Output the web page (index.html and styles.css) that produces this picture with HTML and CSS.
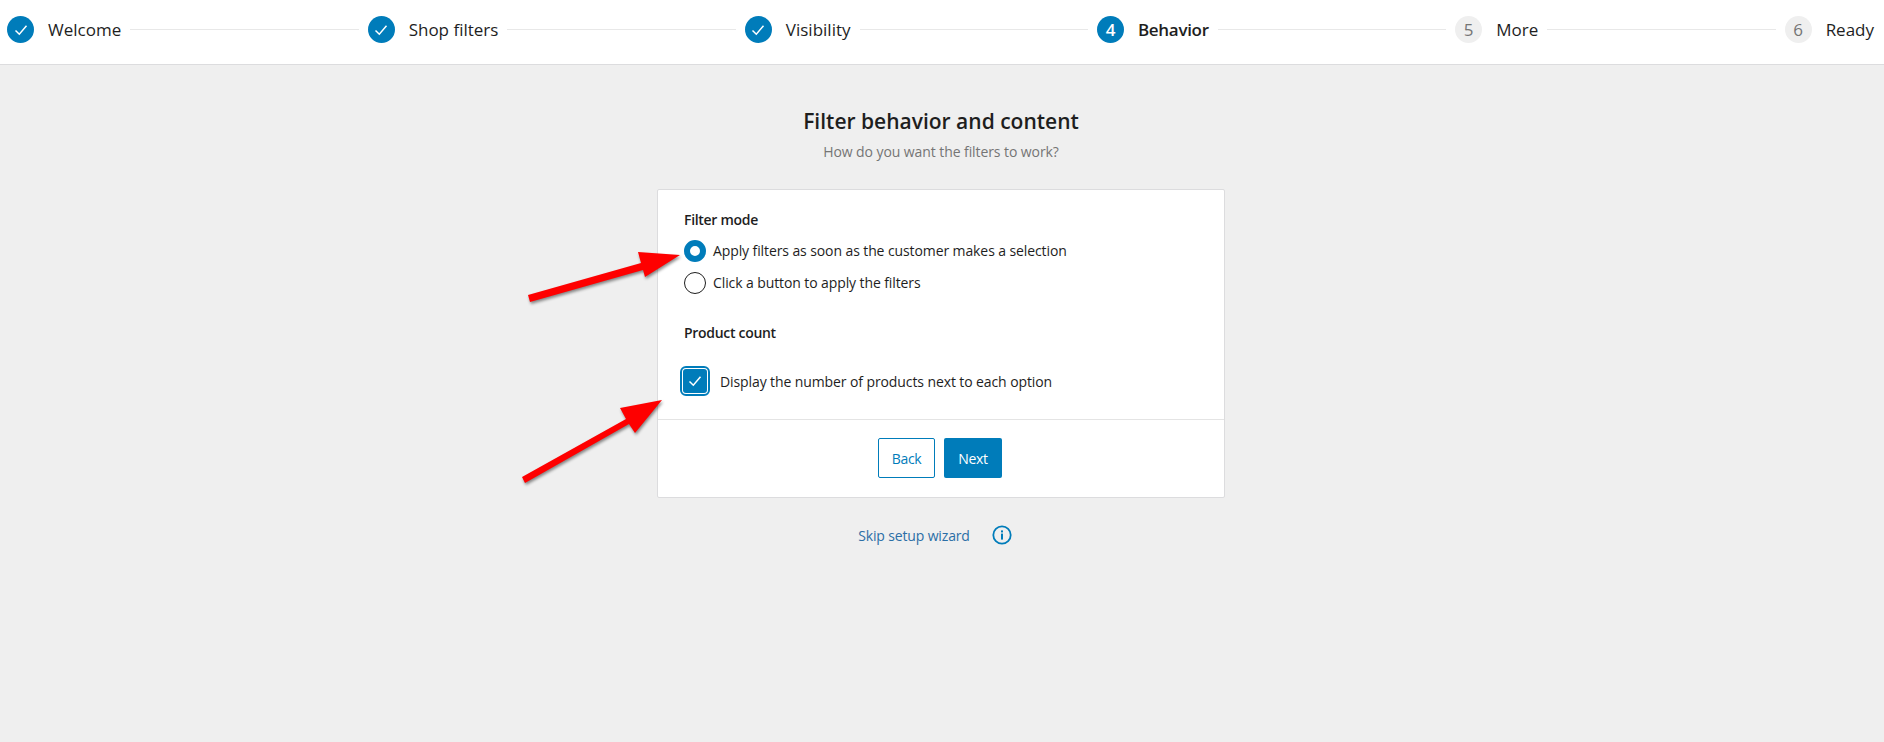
FILE: index.html
```html
<!DOCTYPE html>
<html lang="en">
<head>
    <meta charset="UTF-8">
    <title>Filter behavior and content</title>
    <link rel="stylesheet" href="styles.css">
</head>
<body>
    <header class="steps">
        <div class="step done">
            <span class="step-num"><svg width="16" height="16" viewBox="0 0 16 16"><path d="M2.5 8.5 L6.3 12.2 L13.5 3.8" fill="none" stroke="#fff" stroke-width="1.5"/></svg></span>
            <span class="step-label">Welcome</span>
        </div>
        <div class="step-line"></div>
        <div class="step done">
            <span class="step-num"><svg width="16" height="16" viewBox="0 0 16 16"><path d="M2.5 8.5 L6.3 12.2 L13.5 3.8" fill="none" stroke="#fff" stroke-width="1.5"/></svg></span>
            <span class="step-label">Shop filters</span>
        </div>
        <div class="step-line"></div>
        <div class="step done">
            <span class="step-num"><svg width="16" height="16" viewBox="0 0 16 16"><path d="M2.5 8.5 L6.3 12.2 L13.5 3.8" fill="none" stroke="#fff" stroke-width="1.5"/></svg></span>
            <span class="step-label">Visibility</span>
        </div>
        <div class="step-line"></div>
        <div class="step current">
            <span class="step-num">4</span>
            <span class="step-label">Behavior</span>
        </div>
        <div class="step-line"></div>
        <div class="step">
            <span class="step-num">5</span>
            <span class="step-label">More</span>
        </div>
        <div class="step-line"></div>
        <div class="step">
            <span class="step-num">6</span>
            <span class="step-label">Ready</span>
        </div>
    </header>

    <main class="wizard">
        <h1>Filter behavior and content</h1>
        <p class="subtitle">How do you want the filters to work?</p>

        <div class="card">
            <div class="card-body">
                <h2 class="field-title">Filter mode</h2>
                <div class="radio-row">
                    <span class="radio checked"></span>
                    <span>Apply filters as soon as the customer makes a selection</span>
                </div>
                <div class="radio-row">
                    <span class="radio"></span>
                    <span>Click a button to apply the filters</span>
                </div>
                <h2 class="field-title count-title">Product count</h2>
                <div class="check-row">
                    <span class="checkbox"><svg width="16" height="16" viewBox="0 0 16 16"><path d="M2.5 8.5 L6.3 12.2 L13.5 3.8" fill="none" stroke="#fff" stroke-width="1.5"/></svg></span>
                    <span>Display the number of products next to each option</span>
                </div>
            </div>
            <div class="card-actions">
                <a class="btn btn-back">Back</a>
                <a class="btn btn-next">Next</a>
            </div>
        </div>

        <div class="skip">
            <a>Skip setup wizard</a>
            <svg width="20" height="20" viewBox="0 0 20 20">
                <circle cx="10" cy="10" r="8.7" fill="none" stroke="#007cba" stroke-width="1.8"/>
                <rect x="9" y="8.6" width="2" height="6" fill="#007cba"/>
                <rect x="9" y="5.4" width="2" height="2" fill="#007cba"/>
            </svg>
        </div>
    </main>

    <!-- red arrows drawn over the screenshot -->
    <svg class="arrows" width="1884" height="742" viewBox="0 0 1884 742">
        <polygon points="528,295 641,263 638,252 680,255 645,277 643,270 530,302" fill="#fe0000"/>
        <polygon points="522,477 626,419 620,408 662,400 635,433 629,424 525,483" fill="#fe0000"/>
    </svg>
</body>
</html>
```

FILE: styles.css
```css
* {
    box-sizing: border-box;
}
body {
    font-family: "Open Sans", sans-serif;
    font-size: 14px;
    color: #1e1e1e;
    background-color: #efefef;
    margin: 0;
    height: 742px;
    overflow: hidden;
    position: relative;
}
.steps {
    display: flex;
    align-items: center;
    height: 65px;
    padding: 0 10px 5px 7px;
    background-color: #fff;
    border-bottom: 1px solid #dcdcde;
}
.step {
    display: flex;
    align-items: center;
    gap: 14px;
    font-size: 17px;
}
.step-num {
    display: flex;
    align-items: center;
    justify-content: center;
    width: 27px;
    height: 27px;
    border-radius: 50%;
    background-color: #efefef;
    color: #757575;
}
.done .step-num, .current .step-num {
    background-color: #007cba;
    color: #fff;
}
.current {
    font-weight: 600;
    letter-spacing: -0.3px;
}
.step-line {
    flex: 1;
    height: 1px;
    margin: 0 9px;
    background-color: #e8e8e8;
}
.wizard {
    display: flex;
    flex-direction: column;
    align-items: center;
    padding: 42px 2px 0 0;
}
h1 {
    font-size: 21px;
    font-weight: 600;
    line-height: 28px;
    margin: 0;
}
.subtitle {
    margin: 7px 0 0;
    line-height: 20px;
    font-size: 14px;
    letter-spacing: -0.08px;
    color: #757575;
}
.card {
    width: 568px;
    height: 309px;
    margin-top: 27px;
    background-color: #fff;
    border: 1px solid #dcdcde;
    border-radius: 2px;
    display: flex;
    flex-direction: column;
    letter-spacing: -0.1px;
}
.card-body {
    flex: 1;
    padding: 20px 26px 0;
    border-bottom: 1px solid #e4e4e4;
}
.field-title {
    font-size: 14px;
    font-weight: 600;
    line-height: 20px;
    letter-spacing: -0.3px;
    margin: 0 0 9px;
}
.count-title {
    margin: 29px 0 0;
}
.radio-row {
    display: flex;
    align-items: center;
    gap: 7px;
    height: 23px;
    margin-bottom: 9px;
}
.radio {
    width: 22px;
    height: 22px;
    border-radius: 50%;
    border: 1.5px solid #1e1e1e;
    background-color: #fff;
}
.radio.checked {
    border: 6.5px solid #007cba;
}
.check-row {
    display: flex;
    align-items: center;
    gap: 13px;
    margin-top: 26px;
}
.checkbox {
    display: flex;
    align-items: center;
    justify-content: center;
    width: 24px;
    height: 24px;
    margin-left: -1px;
    background-color: #007cba;
    border-radius: 3px;
    outline: 2px solid #007cba;
    outline-offset: 1px;
}
.card-actions {
    display: flex;
    justify-content: center;
    gap: 9px;
    padding: 18px 2px 0 0;
    height: 77px;
}
.btn {
    display: flex;
    align-items: center;
    justify-content: center;
    width: 58px;
    height: 40px;
    border-radius: 2px;
    letter-spacing: -0.3px;
}
.btn-back {
    width: 57px;
    border: 1px solid #007cba;
    color: #007cba;
}
.btn-next {
    background-color: #007cba;
    color: #fff;
}
.skip {
    display: flex;
    align-items: center;
    gap: 22px;
    margin: 27px 12px 0 0;
    color: #2b6ea6;
    letter-spacing: -0.15px;
}
.arrows {
    position: absolute;
    top: 0;
    left: 0;
    filter: drop-shadow(1px 2px 1.5px rgba(0, 0, 0, 0.45));
}
```
